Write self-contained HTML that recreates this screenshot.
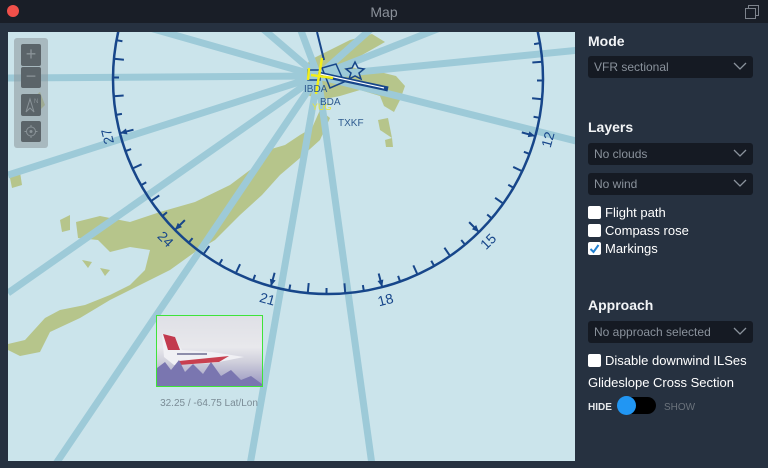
<!DOCTYPE html>
<html><head><meta charset="utf-8"><style>
*{margin:0;padding:0;box-sizing:border-box}
body{width:768px;height:468px;background:#263140;font-family:"Liberation Sans",sans-serif;position:relative;overflow:hidden}
.tb{position:absolute;left:0;top:0;width:768px;height:23px;background:#191e27}
.dot{position:absolute;left:7px;top:5px;width:12px;height:12px;border-radius:50%;background:#f0504a}
.ttl{position:absolute;left:0;width:768px;top:4px;text-align:center;color:#8b919a;font-size:14px}
.map{position:absolute;left:8px;top:32px;width:567px;height:429px;background:#cbe4eb;overflow:hidden}
.side{position:absolute;left:588px;color:#fff}
.h{font-size:14px;font-weight:bold;color:#f2f4f6}
.sel{position:absolute;left:588px;width:165px;height:22px;background:#151a23;border-radius:3px;color:#8a929c;font-size:12px;padding:4px 6px}
.sel svg{position:absolute;right:6px;top:6px}
.cb{position:absolute;left:588px;font-size:13px;color:#fff}
.cb i{display:inline-block;width:13px;height:13px;background:#fff;border-radius:2px;vertical-align:-2px;margin-right:4px;position:relative}
</style></head><body>
<div class="tb"><div class="dot"></div><div class="ttl">Map</div>
<svg style="position:absolute;left:744px;top:4px" width="16" height="16"><rect x="1.5" y="4.5" width="10" height="10" fill="none" stroke="#7d838c"/><path d="M4.5 4.5V1.5H14.5V11.5H11.5" fill="none" stroke="#7d838c"/></svg></div>
<div class="map">
<svg width="567" height="429" viewBox="8 32 567 429" style="position:absolute;left:0;top:0" font-family="Liberation Sans, sans-serif">
<g fill="#b6c58b">
<polygon points="8,350 8,344 25,340 45,318 60,310 85,305 110,295 130,285 145,270 150,250 130,247 110,252 98,240 78,238 76,222 100,216 130,222 160,212 195,202 230,185 250,170 262,165 268,150 285,145 300,135 312,128 320,110 330,118 320,140 300,158 280,175 262,195 240,215 215,240 195,252 170,270 140,285 110,300 80,318 50,332 40,352 20,356"/>
<polygon points="300,75 310,60 330,50 350,40 372,34 385,42 362,55 348,66 362,70 380,72 396,76 405,86 400,100 394,112 384,106 380,96 360,90 340,96 320,100 305,94"/>
<polygon points="30,100 40,92 45,105 38,112 32,110"/><polygon points="10,178 20,172 22,185 12,188"/>
<polygon points="60,220 70,215 70,230 62,232"/><polygon points="82,260 92,262 88,268"/><polygon points="100,268 110,270 105,276"/>
<polygon points="385,140 392,138 393,147 386,147"/><polygon points="378,120 388,118 392,138 380,130"/>
</g>
<g stroke="#9dcad8" stroke-width="7">
<line x1="318" y1="76" x2="8" y2="78"/><line x1="318" y1="76" x2="8" y2="175"/><line x1="318" y1="76" x2="8" y2="293"/>
<line x1="318" y1="76" x2="55" y2="465"/><line x1="318" y1="76" x2="250" y2="465"/><line x1="318" y1="76" x2="372" y2="465"/>
<line x1="318" y1="76" x2="150" y2="28"/><line x1="318" y1="76" x2="262" y2="28"/><line x1="318" y1="76" x2="580" y2="50"/>
<line x1="318" y1="76" x2="580" y2="142"/><line x1="318" y1="76" x2="440" y2="28"/><line x1="318" y1="76" x2="372" y2="28"/>
<line x1="318" y1="76" x2="300" y2="28"/>
</g>
<g id="rose" stroke="#17468a" fill="none"></g>
<line x1="317" y1="32" x2="324" y2="60" stroke="#17468a" stroke-width="2"/>
<g stroke="#17468a" fill="none" stroke-width="1.5">
<rect x="308" y="70" width="12" height="10"/><path d="M322 68l14-4 8 18-14 6z"/><path d="M352 68l3 -6 3 6 6 1-5 4 2 6-6-3-6 3 2-6-5-4z"/>
</g>
<line x1="318" y1="74" x2="388" y2="89" stroke="#17468a" stroke-width="5"/>
<line x1="320" y1="74" x2="384" y2="88" stroke="#fff" stroke-width="1.2"/>
<g stroke="#f2ee1a" stroke-width="2.5"><line x1="322" y1="58" x2="316" y2="94"/><line x1="311" y1="75" x2="333" y2="78"/><line x1="309" y1="68" x2="308" y2="80"/></g>
<text x="312" y="110" fill="#e8e43a" font-size="9">YUG</text>
<g fill="#2d5a8f" font-size="10"><text x="304" y="92">IBDA</text><text x="320" y="105">BDA</text><text x="338" y="126">TXKF</text></g>
</svg>
<div style="position:absolute;left:6px;top:6px;width:34px;height:110px;background:rgba(140,150,155,.55);border-radius:3px"></div>
<div style="position:absolute;left:13px;top:12px;width:20px;height:22px;background:#5b6469;border-radius:2px;color:#8a9398;font-size:18px;text-align:center;line-height:20px">+</div>
<div style="position:absolute;left:13px;top:35px;width:20px;height:21px;background:#5b6469;border-radius:2px;color:#8a9398;font-size:18px;text-align:center;line-height:19px">−</div>
<div style="position:absolute;left:13px;top:62px;width:20px;height:22px;background:#5b6469;border-radius:2px"><svg width="20" height="22"><path d="M5 18L9 5 13 18 9 14z" fill="none" stroke="#8a9398"/><text x="13" y="9" font-size="6" fill="#8a9398">N</text></svg></div>
<div style="position:absolute;left:13px;top:89px;width:20px;height:21px;background:#5b6469;border-radius:2px"><svg width="20" height="21"><circle cx="10" cy="10.5" r="4.5" fill="none" stroke="#8a9398"/><circle cx="10" cy="10.5" r="1.5" fill="#8a9398"/><path d="M10 4v2M10 15v2M3.5 10.5h2M14.5 10.5h2" stroke="#8a9398"/></svg></div>
<div style="position:absolute;left:148px;top:283px;width:107px;height:72px;border:1px solid #3fe33a;background:linear-gradient(180deg,#dfe0e6 0%,#e8e8ec 45%,#d0d0dc 65%,#9896c0 100%);overflow:hidden">
<svg width="105" height="70" style="display:block"><path d="M5 18l12 2 8 14 30 2 32 5-30 6-40 2-10-8z" fill="#f0f0f4"/><path d="M6 18l12 3 5 13-12 0z" fill="#c23a4e"/><path d="M22 45l50-5-10 6-40 3z" fill="#c84050"/><path d="M0 52l8-6 6 8 8-10 6 12 8-8 10 10 8-12 10 14 10-6 10 10 10-4 11 8v14H0z" fill="#7a76b0"/><path d="M20 38h30" stroke="#2a2a60"/></svg></div>
<div style="position:absolute;left:148px;top:366px;width:106px;text-align:center;color:#7b8c96;font-size:10px">32.25 / -64.75 Lat/Lon</div>
</div>
<div class="side h" style="top:33px">Mode</div>
<div class="sel" style="top:56px">VFR sectional<svg width="14" height="8"><path d="M1 1l6 6 6-6" fill="none" stroke="#8a929c" stroke-width="1.3"/></svg></div>
<div class="side h" style="top:119px">Layers</div>
<div class="sel" style="top:143px">No clouds<svg width="14" height="8"><path d="M1 1l6 6 6-6" fill="none" stroke="#8a929c" stroke-width="1.3"/></svg></div>
<div class="sel" style="top:173px">No wind<svg width="14" height="8"><path d="M1 1l6 6 6-6" fill="none" stroke="#8a929c" stroke-width="1.3"/></svg></div>
<div class="cb" style="top:205px"><i></i>Flight path</div>
<div class="cb" style="top:223px"><i></i>Compass rose</div>
<div class="cb" style="top:241px"><i><svg width="13" height="13" style="position:absolute;left:0;top:0"><path d="M2.5 7l3 3 5-7" fill="none" stroke="#2180d0" stroke-width="2"/></svg></i>Markings</div>
<div class="side h" style="top:297px">Approach</div>
<div class="sel" style="top:321px">No approach selected<svg width="14" height="8"><path d="M1 1l6 6 6-6" fill="none" stroke="#8a929c" stroke-width="1.3"/></svg></div>
<div class="cb" style="top:353px"><i></i>Disable downwind ILSes</div>
<div class="cb" style="top:375px">Glideslope Cross Section</div>
<div class="side" style="top:402px;font-size:10px;font-weight:bold;color:#e6e8ea">HIDE</div>
<div style="position:absolute;left:620px;top:397px;width:36px;height:17px;background:#000;border-radius:9px"></div>
<div style="position:absolute;left:617px;top:396px;width:19px;height:19px;background:#2196f3;border-radius:50%"></div>
<div class="side" style="top:402px;left:664px;font-size:10px;color:#6b737c">SHOW</div>
<script>
(function(){var g=document.getElementById('rose'),cx=328,cy=79,R=215,o=-14.6,s='';
s+='<circle cx="'+cx+'" cy="'+cy+'" r="'+R+'" stroke-width="2.5"/>';
for(var h=0;h<360;h+=5){var a=(h+o)*Math.PI/180,sx=Math.sin(a),sy=-Math.cos(a);
var L=(h%30==0)?14:(h%10==0?10:6);
s+='<line x1="'+(cx+R*sx)+'" y1="'+(cy+R*sy)+'" x2="'+(cx+(R-L)*sx)+'" y2="'+(cy+(R-L)*sy)+'" stroke-width="2"/>';
if(h%30==0){var px=cx+R*sx,py=cy+R*sy,qx=cx+(R-7)*sx,qy=cy+(R-7)*sy,nx=-sy*3,ny=sx*3;
s+='<polygon points="'+px+','+py+' '+(qx+nx)+','+(qy+ny)+' '+(qx-nx)+','+(qy-ny)+'" fill="#17468a" stroke="none"/>';
var lx=cx+(R+13)*sx,ly=cy+(R+13)*sy,deg=h+o;if(h>=120&&h<=240)deg-=180;
s+='<text x="'+lx+'" y="'+ly+'" transform="rotate('+deg+' '+lx+' '+ly+')" text-anchor="middle" dominant-baseline="central" font-size="14" fill="#17468a" stroke="none">'+(h==0?'36':(h/10))+'</text>';}}
g.innerHTML=s;})();
</script>
</body></html>
